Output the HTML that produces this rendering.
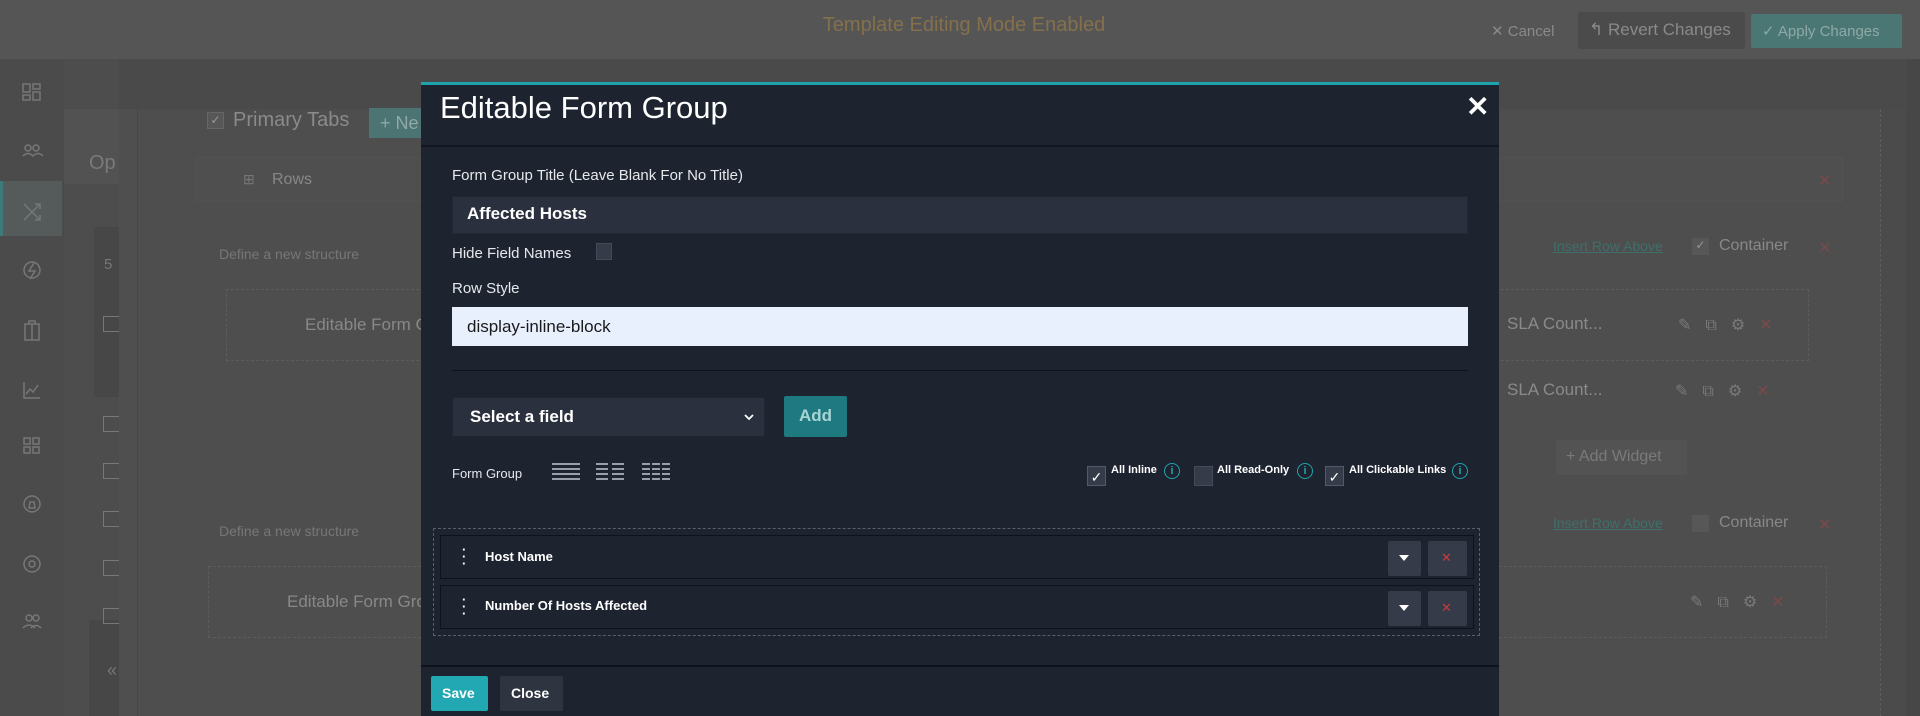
<!DOCTYPE html>
<html><head><meta charset="utf-8"><style>
*{box-sizing:border-box;margin:0;padding:0}
body{width:1920px;height:716px;overflow:hidden;background:#4f4f50;font-family:"Liberation Sans",sans-serif;position:relative}
.a{position:absolute}
.bg{color:#7d7d7d}
.t{white-space:nowrap}
</style></head><body>
<div class="a" style="left:0;top:0;width:1920px;height:59px;background:#555556"></div>
<div class="a t" style="left:0;width:1928px;top:14px;text-align:center;font-size:20px;color:#85704c">Template Editing Mode Enabled</div>
<div class="a t bg" style="left:1491px;top:22px;font-size:15px;color:#8a8a8a">✕ Cancel</div>
<div class="a" style="left:1578px;top:12px;width:167px;height:37px;background:#4b4b4c;border-radius:2px"></div>
<div class="a t" style="left:1589px;top:20px;font-size:17px;color:#8a8a8a">↰ Revert Changes</div>
<div class="a" style="left:1751px;top:14px;width:151px;height:34px;background:#4a7674;border-radius:2px"></div>
<div class="a t" style="left:1762px;top:22px;font-size:15px;color:#8fa9a7">✓ Apply Changes</div>
<div class="a" style="left:0;top:59px;width:64px;height:657px;background:#4b4b4c"></div>
<div class="a" style="left:0;top:181px;width:62px;height:55px;background:#555a5a;border-left:3px solid #3d7b7a"></div>
<div class="a" style="left:64px;top:59px;width:55px;height:657px;background:#4d4d4e"></div>
<div class="a" style="left:119px;top:59px;width:1801px;height:50px;background:#4a4a4b"></div>
<div class="a" style="left:64px;top:109px;width:55px;height:75px;background:#525253"></div>
<div class="a t bg" style="left:89px;top:152px;font-size:20px;color:#7a7a7a">Op</div>
<div class="a" style="left:94px;top:227px;width:25px;height:170px;background:#474748"></div>
<div class="a t" style="left:104px;top:256px;font-size:15px;color:#777">5</div>
<div class="a" style="left:89px;top:620px;width:30px;height:96px;background:#474748"></div>
<div class="a t" style="left:107px;top:660px;font-size:18px;color:#777">«</div>
<div class="a" style="left:137px;top:109px;width:1745px;height:607px;background:#4e4e4f;border-left:1px solid #474747"></div>
<div class="a" style="left:1880px;top:109px;width:26px;height:607px;background:#4b4b4c;border-left:1px dashed #5e5e5e"></div>
<div class="a" style="left:1906px;top:59px;width:14px;height:657px;background:#474748"></div>
<div class="a" style="left:207px;top:112px;width:17px;height:17px;border:1px solid #666;background:#575757;color:#999;font-size:12px;text-align:center">✓</div>
<div class="a t" style="left:233px;top:109px;font-size:20px;color:#8a8a8a">Primary Tabs</div>
<div class="a" style="left:369px;top:108px;width:60px;height:30px;background:#4b7472"></div>
<div class="a t" style="left:380px;top:113px;font-size:18px;color:#8fa9a7">+ Ne</div>
<div class="a" style="left:196px;top:157px;width:1647px;height:45px;border:1px solid #525253;background:#4f4f50"></div>
<div class="a t" style="left:272px;top:171px;font-size:16px;color:#888">Rows</div>
<div class="a t" style="left:243px;top:171px;font-size:14px;color:#777">⊞</div>
<div class="a t" style="left:1818px;top:171px;font-size:16px;color:#7a4a4a">✕</div>
<div class="a t" style="left:219px;top:246px;font-size:14px;color:#777">Define a new structure</div>
<div class="a t" style="left:1553px;top:238px;font-size:14px;color:#3f6f6a;text-decoration:underline">Insert Row Above</div>
<div class="a" style="left:1692px;top:238px;width:17px;height:17px;background:#575757;color:#999;font-size:12px;text-align:center">✓</div>
<div class="a t" style="left:1719px;top:237px;font-size:16px;color:#888">Container</div>
<div class="a t" style="left:1818px;top:238px;font-size:16px;color:#7a4a4a">✕</div>
<div class="a" style="left:226px;top:289px;width:1583px;height:72px;border:1px dashed #5c5c5c"></div>
<div class="a t" style="left:305px;top:315px;font-size:17px;color:#888">Editable Form G</div>
<div class="a t" style="left:1507px;top:314px;font-size:17px;color:#8a8a8a">SLA Count...</div>
<div class="a t" style="left:1507px;top:380px;font-size:17px;color:#8a8a8a">SLA Count...</div>
<div class="a t" style="left:1678px;top:315px;font-size:16px;color:#7a7a7a;letter-spacing:14px">✎⧉⚙<span style="color:#7a4a4a">✕</span></div>
<div class="a t" style="left:1675px;top:381px;font-size:16px;color:#7a7a7a;letter-spacing:14px">✎⧉⚙<span style="color:#7a4a4a">✕</span></div>
<div class="a" style="left:1556px;top:440px;width:131px;height:35px;background:#535354"></div>
<div class="a t" style="left:1566px;top:448px;font-size:16px;color:#7a7a7a">+ Add Widget</div>
<div class="a t" style="left:219px;top:523px;font-size:14px;color:#777">Define a new structure</div>
<div class="a t" style="left:1553px;top:515px;font-size:14px;color:#3f6f6a;text-decoration:underline">Insert Row Above</div>
<div class="a" style="left:1692px;top:515px;width:17px;height:17px;background:#575757"></div>
<div class="a t" style="left:1719px;top:514px;font-size:16px;color:#888">Container</div>
<div class="a t" style="left:1818px;top:515px;font-size:16px;color:#7a4a4a">✕</div>
<div class="a" style="left:208px;top:566px;width:1619px;height:72px;border:1px dashed #5c5c5c"></div>
<div class="a t" style="left:287px;top:592px;font-size:17px;color:#888">Editable Form Gro</div>
<div class="a t" style="left:1690px;top:592px;font-size:16px;color:#7a7a7a;letter-spacing:14px">✎⧉⚙<span style="color:#7a4a4a">✕</span></div>
<div class="a" style="left:103px;top:316px;width:16px;height:16px;border:1px solid #777;border-right:none"></div>
<div class="a" style="left:103px;top:416px;width:16px;height:16px;border:1px solid #777;border-right:none"></div>
<div class="a" style="left:103px;top:463px;width:16px;height:16px;border:1px solid #777;border-right:none"></div>
<div class="a" style="left:103px;top:511px;width:16px;height:16px;border:1px solid #777;border-right:none"></div>
<div class="a" style="left:103px;top:560px;width:16px;height:16px;border:1px solid #777;border-right:none"></div>
<div class="a" style="left:103px;top:608px;width:16px;height:16px;border:1px solid #777;border-right:none"></div>
<svg class="a" style="left:21px;top:82px" width="22" height="560" fill="none" stroke="#777" stroke-width="1.5">
<rect x="2" y="2" width="7" height="8"/><rect x="12" y="2" width="7" height="5"/><rect x="2" y="13" width="7" height="5"/><rect x="12" y="10" width="7" height="8"/>
<circle cx="7" cy="66" r="3"/><circle cx="15" cy="66" r="3"/><path d="M2 74q5-5 10 0q5-5 10 0"/>
<path d="M3 122l16 16M3 138l16-16M14 122h5v5M14 138h5v-5"/>
<circle cx="11" cy="188" r="8"/><path d="M13 181l-5 8h6l-5 8"/>
<rect x="4" y="242" width="14" height="16"/><path d="M8 242v-3h6v3M11 242v16"/>
<path d="M3 300v16h16M5 312l4-5 3 3 5-7"/>
<rect x="3" y="356" width="6" height="6"/><rect x="12" y="356" width="6" height="6"/><rect x="3" y="365" width="6" height="6"/><rect x="12" y="365" width="6" height="6"/>
<circle cx="11" cy="422" r="8"/><path d="M8 426h6l-1-6h-4z"/>
<circle cx="11" cy="482" r="8"/><circle cx="11" cy="482" r="3"/>
<circle cx="8" cy="536" r="3"/><circle cx="15" cy="536" r="3"/><path d="M2 546q6-6 12 0M10 546q5-5 10 0"/>
</svg>

<div class="a" style="left:421px;top:82px;width:1078px;height:634px;background:#1e2330;border-top:3px solid #1fa4ad"></div>
<div class="a" style="left:421px;top:145px;width:1078px;height:2px;background:#111620"></div>
<div class="a t" style="left:440px;top:90px;font-size:31px;color:#fff">Editable Form Group</div>
<div class="a t" style="left:1466px;top:90px;font-size:28px;color:#fff;font-weight:bold">✕</div>
<div class="a t" style="left:452px;top:167px;font-size:15px;color:#e6e8ec">Form Group Title (Leave Blank For No Title)</div>
<div class="a" style="left:452px;top:196px;width:1016px;height:38px;background:#2a303d;border:1px solid #232834"></div>
<div class="a t" style="left:467px;top:204px;font-size:17px;color:#fff;font-weight:bold">Affected Hosts</div>
<div class="a t" style="left:452px;top:245px;font-size:15px;color:#e6e8ec">Hide Field Names</div>
<div class="a" style="left:596px;top:243px;width:16px;height:17px;background:#353b48;border:1px solid #444a57"></div>
<div class="a t" style="left:452px;top:280px;font-size:15px;color:#e6e8ec">Row Style</div>
<div class="a" style="left:452px;top:307px;width:1016px;height:39px;background:#e8f0fe"></div>
<div class="a t" style="left:467px;top:317px;font-size:17px;color:#1a1a1a">display-inline-block</div>
<div class="a" style="left:452px;top:370px;width:1016px;height:1px;background:#0e121a"></div>
<div class="a" style="left:452px;top:397px;width:313px;height:40px;background:#2a303d;border:1px solid #20252f"></div>
<div class="a t" style="left:470px;top:407px;font-size:17px;color:#fff;font-weight:bold">Select a field</div>
<svg class="a" style="left:743px;top:412px" width="12" height="10"><path d="M2 3l4 4 4-4" stroke="#fff" stroke-width="1.8" fill="none"/></svg>
<div class="a" style="left:784px;top:396px;width:63px;height:41px;background:#1e7a80;border-radius:2px"></div>
<div class="a t" style="left:799px;top:406px;font-size:17px;color:#a8d4d6;font-weight:bold">Add</div>
<div class="a t" style="left:452px;top:466px;font-size:13px;color:#e6e8ec">Form Group</div>
<svg class="a" style="left:552px;top:462px" width="125" height="18" stroke="#9aa0aa" stroke-width="2">
<path d="M0 2h28M0 7h28M0 12h28M0 17h28"/>
<path d="M44 2h12M60 2h12M44 7h12M60 7h12M44 12h12M60 12h12M44 17h12M60 17h12" />
<path d="M90 2h8M100 2h8M110 2h8M90 7h8M100 7h8M110 7h8M90 12h8M100 12h8M110 12h8M90 17h8M100 17h8M110 17h8"/>
</svg>
<div class="a" style="left:1087px;top:466px;width:19px;height:20px;background:#353b48;border:1px solid #555b66;color:#fff;font-size:14px;text-align:center;line-height:20px">✓</div>
<div class="a t" style="left:1111px;top:464px;font-size:11px;color:#fff;font-weight:bold">All Inline</div>
<div class="a" style="left:1164px;top:463px;width:16px;height:16px;border:1.5px solid #1fa4ad;border-radius:50%;color:#1fa4ad;font-size:11px;text-align:center;line-height:14px;font-weight:bold">i</div>
<div class="a" style="left:1194px;top:466px;width:19px;height:20px;background:#353b48;border:1px solid #444a57"></div>
<div class="a t" style="left:1217px;top:464px;font-size:11px;color:#fff;font-weight:bold">All Read-Only</div>
<div class="a" style="left:1297px;top:463px;width:16px;height:16px;border:1.5px solid #1fa4ad;border-radius:50%;color:#1fa4ad;font-size:11px;text-align:center;line-height:14px;font-weight:bold">i</div>
<div class="a" style="left:1325px;top:466px;width:19px;height:20px;background:#353b48;border:1px solid #555b66;color:#fff;font-size:14px;text-align:center;line-height:20px">✓</div>
<div class="a t" style="left:1349px;top:464px;font-size:11px;color:#fff;font-weight:bold">All Clickable Links</div>
<div class="a" style="left:1452px;top:463px;width:16px;height:16px;border:1.5px solid #1fa4ad;border-radius:50%;color:#1fa4ad;font-size:11px;text-align:center;line-height:14px;font-weight:bold">i</div>
<div class="a" style="left:433px;top:528px;width:1047px;height:108px;border:1px dashed #5a5f68"></div>
<div class="a" style="left:440px;top:535px;width:1034px;height:44px;background:#1e2330;border:1px solid #0e121a"></div>
<div class="a" style="left:440px;top:585px;width:1034px;height:44px;background:#1e2330;border:1px solid #0e121a"></div>
<div class="a t" style="left:462px;top:546px;font-size:13px;color:#fff;line-height:7px;font-weight:bold">·<br>·<br>·</div>
<div class="a t" style="left:462px;top:596px;font-size:13px;color:#fff;line-height:7px;font-weight:bold">·<br>·<br>·</div>
<div class="a t" style="left:485px;top:549px;font-size:13px;color:#fff;font-weight:bold">Host Name</div>
<div class="a t" style="left:485px;top:598px;font-size:13px;color:#fff;font-weight:bold">Number Of Hosts Affected</div>
<div class="a" style="left:1388px;top:541px;width:33px;height:35px;background:#353b48;border-radius:2px"></div>
<div class="a" style="left:1428px;top:541px;width:39px;height:35px;background:#353b48;border-radius:2px"></div>
<div class="a" style="left:1388px;top:591px;width:33px;height:35px;background:#353b48;border-radius:2px"></div>
<div class="a" style="left:1428px;top:591px;width:39px;height:35px;background:#353b48;border-radius:2px"></div>
<svg class="a" style="left:1399px;top:554px" width="10" height="8"><path d="M0 1h10L5 7z" fill="#fff"/></svg>
<svg class="a" style="left:1399px;top:604px" width="10" height="8"><path d="M0 1h10L5 7z" fill="#fff"/></svg>
<div class="a t" style="left:1441px;top:550px;font-size:13px;color:#d03838">✕</div>
<div class="a t" style="left:1441px;top:600px;font-size:13px;color:#d03838">✕</div>
<div class="a" style="left:421px;top:665px;width:1078px;height:2px;background:#0e121a"></div>
<div class="a" style="left:431px;top:676px;width:57px;height:35px;background:#22a8b2;border-radius:2px"></div>
<div class="a t" style="left:442px;top:685px;font-size:14px;color:#fff;font-weight:bold">Save</div>
<div class="a" style="left:500px;top:676px;width:63px;height:35px;background:#2e3440;border-radius:2px"></div>
<div class="a t" style="left:511px;top:685px;font-size:14px;color:#fff;font-weight:bold">Close</div>
</body></html>
